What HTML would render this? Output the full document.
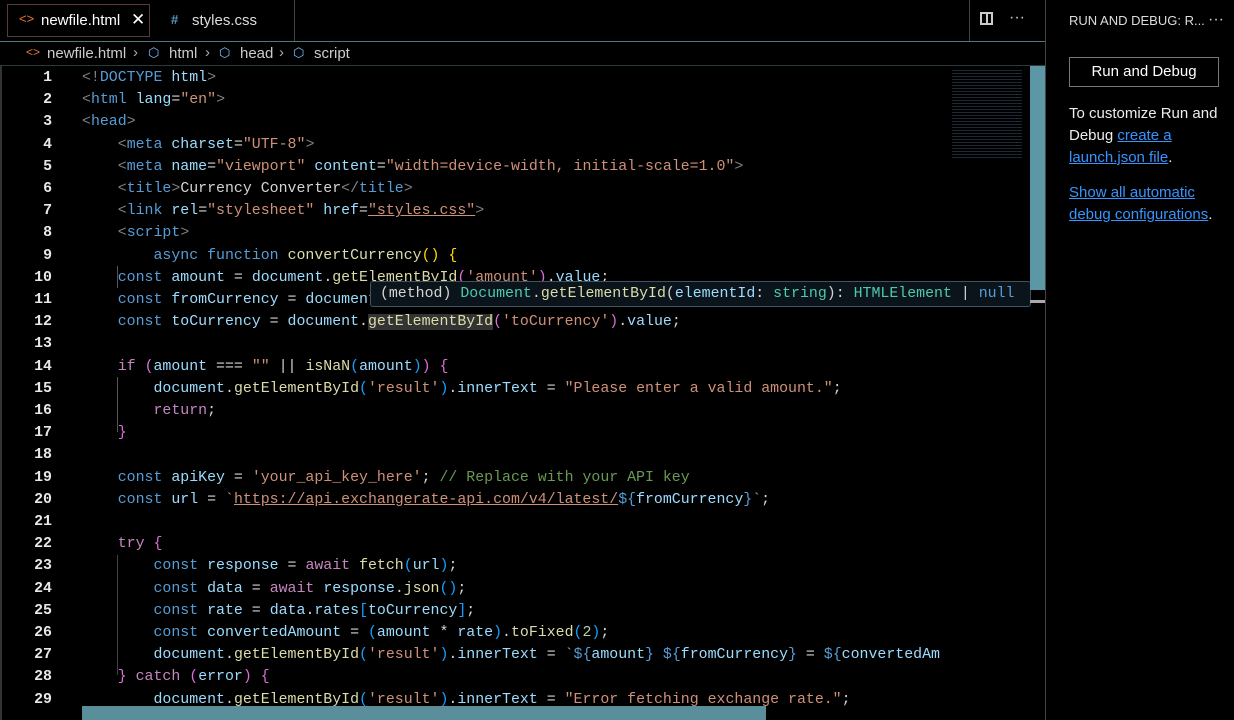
<!DOCTYPE html>
<html><head><style>
body{margin:0;width:1234px;height:720px;background:#000;overflow:hidden;font-family:"Liberation Sans",sans-serif;color:#ccc;position:relative}
.abs{position:absolute}
.code{position:absolute;left:82px;top:67px;font-family:"Liberation Mono",monospace;font-size:14.9px;line-height:22.2px;white-space:pre;color:#d4d4d4}
.ln{position:absolute;left:0;width:52px;top:67px;text-align:right;font-family:"Liberation Mono",monospace;font-size:14.9px;line-height:22.2px;color:#e8e8e8;font-weight:bold;white-space:pre}
.g{color:#808080}.t{color:#569cd6}.a{color:#9cdcfe}.s{color:#ce9178}.k{color:#569cd6}.f{color:#dcdcaa}.v{color:#9cdcfe}.y{color:#ffd700}.p{color:#da70d6}.c{color:#6a9955}.b{color:#179fff}.n{color:#b5cea8}.o{color:#c586c0}
a{color:#3794ff;text-decoration:underline}
</style></head><body>
<div class="abs" style="left:0;top:0;width:1046px;height:41px;border-bottom:1px solid #4a7a80"></div>
<div class="abs" style="left:7px;top:4px;width:141px;height:31px;border:1px solid #5a3a34;font-size:15px;color:#fff"><span class="abs" style="left:11px;top:6px;color:#e37933;font-size:13px">&lt;&gt;</span><span class="abs" style="left:33px;top:7px">newfile.html</span><span class="abs" style="left:123px;top:5px;font-size:17px">✕</span></div>
<div class="abs" style="left:154px;top:0;width:140px;height:41px;border-right:1px solid #444;font-size:15px;color:#ddd"><span class="abs" style="left:17px;top:12px;color:#519aba;font-size:13px;font-weight:bold">#</span><span class="abs" style="left:38px;top:12px">styles.css</span></div>
<div class="abs" style="left:969px;top:0;width:1px;height:41px;background:#444"></div>
<div class="abs" style="left:980px;top:12px;width:13px;height:13px;border:2px solid #ccc;box-sizing:border-box"></div><div class="abs" style="left:986px;top:12px;width:2px;height:13px;background:#ccc"></div>
<div class="abs" style="left:1009px;top:9px;font-size:16px;color:#ccc">···</div>
<div class="abs" style="left:0;top:42px;width:1046px;height:23px;border-bottom:1px solid #2a3a3c;font-size:15px;color:#ccc;white-space:nowrap">
<span class="abs" style="left:26px;top:3px;color:#e37933;font-size:12px">&lt;&gt;</span><span class="abs" style="left:47px;top:3px">newfile.html</span>
<span class="abs" style="left:133px;top:2px;color:#aaa">›</span><span class="abs" style="left:148px;top:3px;color:#75beff;font-size:13px">⬡</span><span class="abs" style="left:169px;top:3px">html</span>
<span class="abs" style="left:205px;top:2px;color:#aaa">›</span><span class="abs" style="left:219px;top:3px;color:#75beff;font-size:13px">⬡</span><span class="abs" style="left:240px;top:3px">head</span>
<span class="abs" style="left:279px;top:2px;color:#aaa">›</span><span class="abs" style="left:293px;top:3px;color:#75beff;font-size:13px">⬡</span><span class="abs" style="left:314px;top:3px">script</span>
</div>
<div class="abs" style="left:0;top:66px;width:2px;height:654px;background:#333"></div>
<div class="ln">1
2
3
4
5
6
7
8
9
10
11
12
13
14
15
16
17
18
19
20
21
22
23
24
25
26
27
28
29</div>
<div class="abs" style="left:117px;top:266px;width:1px;height:22px;background:#555"></div>
<div class="abs" style="left:117px;top:377px;width:1px;height:55px;background:#555"></div>
<div class="abs" style="left:117px;top:555px;width:1px;height:120px;background:#444"></div>
<div class="code"><span class="g">&lt;!</span><span class="t">DOCTYPE</span> <span class="a">html</span><span class="g">&gt;</span>
<span class="g">&lt;</span><span class="t">html</span> <span class="a">lang</span>=<span class="s">"en"</span><span class="g">&gt;</span>
<span class="g">&lt;</span><span class="t">head</span><span class="g">&gt;</span>
    <span class="g">&lt;</span><span class="t">meta</span> <span class="a">charset</span>=<span class="s">"UTF-8"</span><span class="g">&gt;</span>
    <span class="g">&lt;</span><span class="t">meta</span> <span class="a">name</span>=<span class="s">"viewport"</span> <span class="a">content</span>=<span class="s">"width=device-width, initial-scale=1.0"</span><span class="g">&gt;</span>
    <span class="g">&lt;</span><span class="t">title</span><span class="g">&gt;</span>Currency Converter<span class="g">&lt;/</span><span class="t">title</span><span class="g">&gt;</span>
    <span class="g">&lt;</span><span class="t">link</span> <span class="a">rel</span>=<span class="s">"stylesheet"</span> <span class="a">href</span>=<span class="s" style="text-decoration:underline">"styles.css"</span><span class="g">&gt;</span>
    <span class="g">&lt;</span><span class="t">script</span><span class="g">&gt;</span>
        <span class="k">async</span> <span class="k">function</span> <span class="f">convertCurrency</span><span class="y">()</span> <span class="y">{</span>
    <span class="k">const</span> <span class="v">amount</span> = <span class="v">document</span>.<span class="f">getElementById</span><span class="p">(</span><span class="s">'amount'</span><span class="p">)</span>.<span class="v">value</span>;
    <span class="k">const</span> <span class="v">fromCurrency</span> = <span class="v">document</span>.<span class="f">getElementById</span><span class="p">(</span><span class="s">'fromCurrency'</span><span class="p">)</span>.<span class="v">value</span>;
    <span class="k">const</span> <span class="v">toCurrency</span> = <span class="v">document</span>.<span class="f" style="background:#333">getElementById</span><span class="p">(</span><span class="s">'toCurrency'</span><span class="p">)</span>.<span class="v">value</span>;

    <span class="o">if</span> <span class="p">(</span><span class="v">amount</span> === <span class="s">""</span> || <span class="f">isNaN</span><span class="b">(</span><span class="v">amount</span><span class="b">)</span><span class="p">)</span> <span class="p">{</span>
        <span class="v">document</span>.<span class="f">getElementById</span><span class="b">(</span><span class="s">'result'</span><span class="b">)</span>.<span class="v">innerText</span> = <span class="s">"Please enter a valid amount."</span>;
        <span class="o">return</span>;
    <span class="p">}</span>

    <span class="k">const</span> <span class="v">apiKey</span> = <span class="s">'your_api_key_here'</span>; <span class="c">// Replace with your API key</span>
    <span class="k">const</span> <span class="v">url</span> = <span class="s">`<u>https://api.exchangerate-api.com/v4/latest/</u></span><span class="k">${</span><span class="v">fromCurrency</span><span class="k">}</span><span class="s">`</span>;

    <span class="o">try</span> <span class="p">{</span>
        <span class="k">const</span> <span class="v">response</span> = <span class="o">await</span> <span class="f">fetch</span><span class="b">(</span><span class="v">url</span><span class="b">)</span>;
        <span class="k">const</span> <span class="v">data</span> = <span class="o">await</span> <span class="v">response</span>.<span class="f">json</span><span class="b">()</span>;
        <span class="k">const</span> <span class="v">rate</span> = <span class="v">data</span>.<span class="v">rates</span><span class="b">[</span><span class="v">toCurrency</span><span class="b">]</span>;
        <span class="k">const</span> <span class="v">convertedAmount</span> = <span class="b">(</span><span class="v">amount</span> * <span class="v">rate</span><span class="b">)</span>.<span class="f">toFixed</span><span class="b">(</span><span class="n">2</span><span class="b">)</span>;
        <span class="v">document</span>.<span class="f">getElementById</span><span class="b">(</span><span class="s">'result'</span><span class="b">)</span>.<span class="v">innerText</span> = <span class="s">`</span><span class="k">${</span><span class="v">amount</span><span class="k">}</span> <span class="k">${</span><span class="v">fromCurrency</span><span class="k">}</span> = <span class="k">${</span><span class="v">convertedAm</span>
    <span class="p">}</span> <span class="o">catch</span> <span class="p">(</span><span class="v">error</span><span class="p">)</span> <span class="p">{</span>
        <span class="v">document</span>.<span class="f">getElementById</span><span class="b">(</span><span class="s">'result'</span><span class="b">)</span>.<span class="v">innerText</span> = <span class="s">"Error fetching exchange rate."</span>;</div>
<div class="abs" style="left:944px;top:66px;width:86px;height:654px;background:#000"></div>
<div class="abs" style="left:952px;top:68px;width:70px;height:90px;background:repeating-linear-gradient(#000 0 2px,#2a3a4a 2px 3px);opacity:.7"></div>
<div class="abs" style="left:370px;top:281px;width:659px;height:24px;background:#0a141a;border:1px solid #3d5560;border-radius:3px;font-family:'Liberation Mono',monospace;font-size:14.9px;line-height:24px;white-space:pre;color:#d4d4d4"> <span>(method)</span> <span style="color:#4ec9b0">Document</span>.<span class="f">getElementById</span>(<span class="v">elementId</span>: <span style="color:#4ec9b0">string</span>): <span style="color:#4ec9b0">HTMLElement</span> | <span class="k">null</span></div>
<div class="abs" style="left:1030px;top:66px;width:15px;height:224px;background:#5b97a5"></div>
<div class="abs" style="left:1030px;top:300px;width:15px;height:3px;background:#aaa"></div>
<div class="abs" style="left:82px;top:706px;width:684px;height:14px;background:#5b8e9b"></div>
<div class="abs" style="left:1045px;top:0;width:1px;height:720px;background:#444"></div>
<div class="abs" style="left:1069px;top:13px;font-size:13px;color:#ddd">RUN AND DEBUG: R...</div>
<div class="abs" style="left:1208px;top:11px;font-size:16px;color:#ccc">···</div>
<div class="abs" style="left:1069px;top:57px;width:150px;height:30px;border:1px solid #777;box-sizing:border-box;font-size:15px;color:#fff;text-align:center;line-height:28px">Run and Debug</div>
<div class="abs" style="left:1069px;top:103px;width:160px;font-size:15px;line-height:22px;color:#eee">To customize Run and Debug <a>create a launch.json file</a>.</div>
<div class="abs" style="left:1069px;top:182px;width:160px;font-size:15px;line-height:22px;color:#eee"><a>Show all automatic debug configurations</a>.</div>
</body></html>
